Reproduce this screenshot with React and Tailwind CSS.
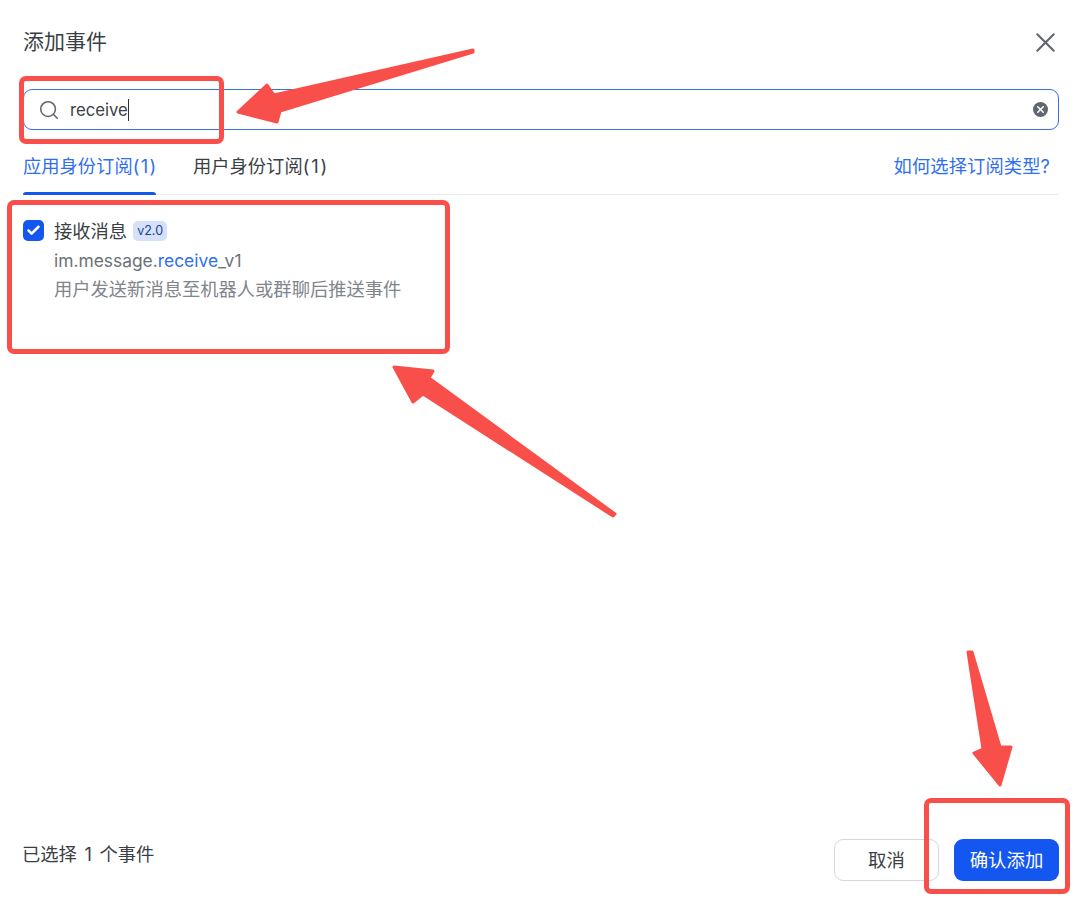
import { Search, X, Check } from 'lucide-react'

const font = { fontFamily: 'Inter, "Noto Sans CJK SC", sans-serif' }

function RedBox({ className }) {
  return <div className={`absolute border-[5px] border-[#f94f4a] rounded-[7px] ${className}`} />
}

export default function App() {
  return (
    <div
      className="relative w-[1080px] h-[907px] bg-white overflow-hidden pl-[23px] pr-[21px] flex flex-col text-[18.3px] text-[#1f2329]"
      style={font}
    >
      <div className="h-[89px] flex items-start justify-between pt-[26px]">
        <h1 className="text-[21px] leading-[32px] text-[#3a3f46]">添加事件</h1>
        <X className="w-[33px] h-[33px] mr-[-3px] text-[#5f6670]" strokeWidth={1.5} />
      </div>

      <div className="h-[41px] border border-[#3a6fe0] rounded-[9px] flex items-center pl-[14px] pr-[10px]">
        <Search className="w-[22px] h-[22px] text-[#5f6670]" strokeWidth={1.7} />
        <span className="ml-[10px] mt-[3px] text-[16.7px] text-[#3a3f46]">receive</span>
        <span className="w-px h-[22px] bg-[#2b2f36]" />
        <span className="ml-auto w-[15px] h-[15px] rounded-full bg-[#5f6670] flex items-center justify-center">
          <X className="w-[11px] h-[11px] text-white" strokeWidth={3.4} />
        </span>
      </div>

      <div className="h-[65px] flex items-stretch border-b border-[#e8eaed]">
        <div className="relative flex items-center pt-[10px] text-[#2f6ff0] w-[133px] whitespace-nowrap">
          应用身份订阅<span className="tracking-[1.3px]">(1)</span>
          <div className="absolute left-0 right-0 bottom-[-1px] h-[3px] rounded-t-[3px] bg-[#1456f0]" />
        </div>
        <div className="flex items-center pt-[10px] ml-[37px] text-[#3a3f46] whitespace-nowrap">
          用户身份订阅<span className="tracking-[1.9px]">(1)</span>
        </div>
        <a className="ml-auto mr-[9px] flex items-center pt-[10px] text-[#2f6ff0] whitespace-nowrap tracking-[0.1px]">如何选择订阅类型?</a>
      </div>

      <div className="flex items-start gap-[10px] pt-[25px]">
        <span className="w-[21px] h-[21px] rounded-[5px] bg-[#1456f0] flex items-center justify-center shrink-0">
          <Check className="w-[15px] h-[15px] text-white" strokeWidth={4} />
        </span>
        <div>
          <div className="flex items-center h-[22px] text-[#3a3f46]">
            <span className="mt-[1px]">接收消息</span>
            <span className="ml-[6px] h-[20px] w-[34px] rounded-[5px] bg-[#d5e1fb] text-[#1e3f8f] text-[12.5px] flex items-center justify-center">v2.0</span>
          </div>
          <div className="mt-[4px] h-[29px] leading-[29px] text-[17.4px] text-[#6b7178]">
            im.message.<span className="text-[#2f6ff0]">receive</span>_v1
          </div>
          <div className="h-[29px] leading-[29px] text-[#80858c] whitespace-nowrap">用户发送新消息至机器人或群聊后推送事件</div>
        </div>
      </div>

      <div className="mt-auto mb-[26px] flex items-center justify-between">
        <span className="-mt-[11px] -ml-[1px] text-[18.3px] text-[#3a3f46] [word-spacing:2.5px]">已选择 1 个事件</span>
        <div className="flex gap-[15px] text-[18.4px]">
          <button className="w-[105px] h-[42px] pt-[1px] rounded-[9px] border border-[#d5d7da] text-[#3a3f46]">取消</button>
          <button className="w-[105px] h-[42px] pt-[1px] rounded-[9px] bg-[#1456f0] text-white">确认添加</button>
        </div>
      </div>

      {/* red annotations drawn on top of the screenshot */}
      <RedBox className="left-[19px] top-[76px] w-[205px] h-[68px]" />
      <RedBox className="left-[7px] top-[200px] w-[443px] h-[154px]" />
      <RedBox className="left-[924px] top-[798px] w-[146px] h-[96px]" />
      <svg className="absolute left-0 top-0 pointer-events-none" width="1080" height="907" fill="#f94f4a" stroke="#f94f4a" strokeWidth="3" strokeLinejoin="round">
        <polygon points="473,50 274,95 267,85 238,112 277,122 280,111 473,52" />
        <polygon points="394,367 433,371 429,378 615,514 613,516 423,394 413,402" />
        <polygon points="968,652 972,652 1000,747 1011,747 1000,785 974,753 983,749" />
      </svg>
    </div>
  )
}
